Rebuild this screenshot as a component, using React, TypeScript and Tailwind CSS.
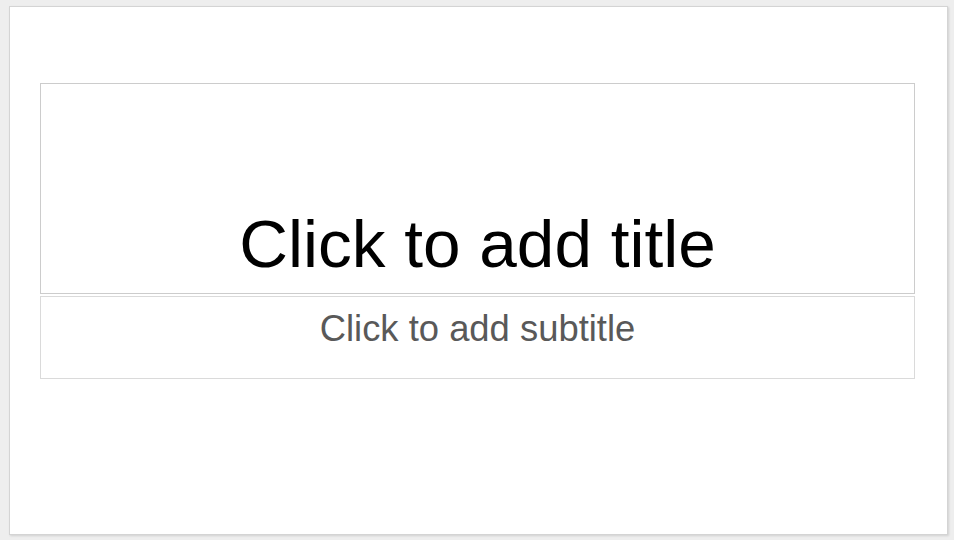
export default function App() {
  return (
    <div className="h-[540px] w-[954px] overflow-hidden bg-[#eeeeee] pl-[9px] pt-[6px] font-['Liberation_Sans',Arial,sans-serif]">
      <div className="flex h-[529px] w-[939px] flex-col border border-[#d4d4d4] bg-white pl-[30px] pt-[76px] shadow-[1px_1px_2px_rgba(0,0,0,0.12)]">
        <div className="flex h-[211px] w-[875px] items-end justify-center border border-[#cccccc] pb-[11px]">
          <h1 className="text-[67.5px] leading-[77px] text-black">Click to add title</h1>
        </div>
        <div className="mt-[2px] flex h-[83px] w-[875px] justify-center border border-[#dadada] pt-[12px]">
          <p className="text-[36.4px] leading-[40px] text-[#595959]">Click to add subtitle</p>
        </div>
      </div>
    </div>
  );
}
